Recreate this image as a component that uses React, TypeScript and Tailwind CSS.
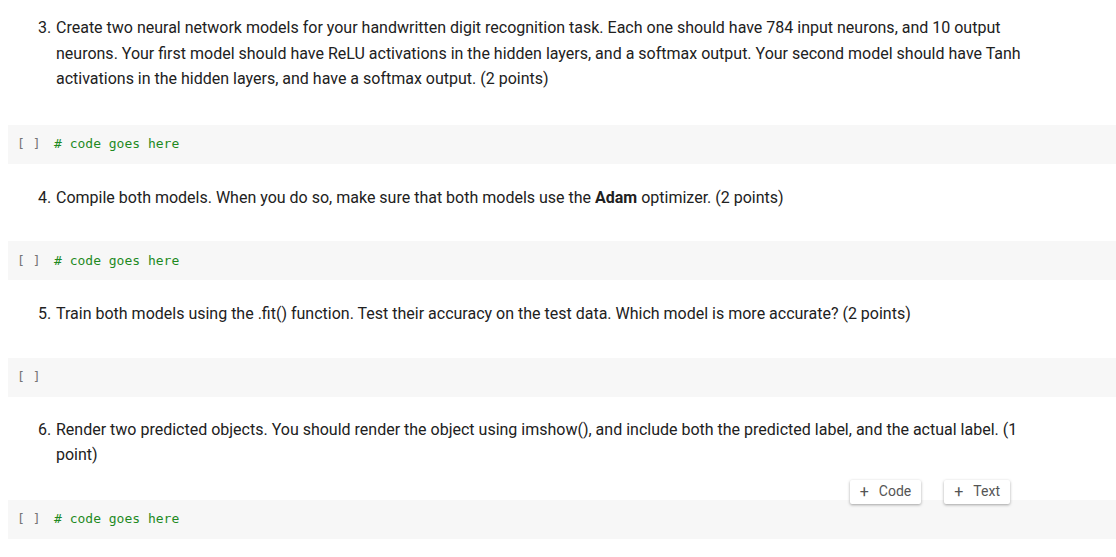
import React from 'react';

const textFont = { fontFamily: 'Roboto, "Noto Sans", sans-serif' };

function TextCell({ num, children, className = '' }: { num: string; children: React.ReactNode; className?: string }) {
  return (
    <div className={`flex pl-[38px] pr-[72px] text-[16px] leading-[25.5px] text-[#212121] ${className}`}>
      <span className="w-[18px] shrink-0">{num}</span>
      <p>{children}</p>
    </div>
  );
}

function CodeCell({ code }: { code?: string }) {
  return (
    <div className="ml-2 flex h-[39px] items-center bg-[#f7f7f7] font-['DejaVu_Sans_Mono',monospace] text-[13px]">
      <span className="w-[46px] shrink-0 pl-[9px] text-[#757575] whitespace-pre">[ ]</span>
      {code && <span className="text-[#1f8a1f] whitespace-pre">{code}</span>}
    </div>
  );
}

export default function App() {
  return (
    <div className="w-[1116px] h-[557px] overflow-hidden bg-white" style={textFont}>
      <TextCell num="3." className="pt-[15px] pb-[33px]">
        Create two neural network models for your handwritten digit recognition task. Each one should have 784 input
        neurons, and 10 output neurons. Your first model should have ReLU activations in the hidden layers, and a
        softmax output. Your second model should have Tanh activations in the hidden layers, and have a softmax output.
        (2 points)
      </TextCell>
      <CodeCell code="# code goes here" />
      <TextCell num="4." className="pt-[21px] pb-[31px]">
        Compile both models. When you do so, make sure that both models use the <b className="font-bold">Adam</b>{' '}
        optimizer. (2 points)
      </TextCell>
      <CodeCell code="# code goes here" />
      <TextCell num="5." className="pt-[21px] pb-[31px]">
        Train both models using the .fit() function. Test their accuracy on the test data. Which model is more
        accurate? (2 points)
      </TextCell>
      <CodeCell />
      <TextCell num="6." className="pt-[20px] pb-[32px]">
        Render two predicted objects. You should render the object using imshow(), and include both the predicted
        label, and the actual label. (1 point)
      </TextCell>
      <div className="relative">
        <div className="absolute right-[106px] top-[-20px] flex gap-[23px] text-[14px] text-[#555]">
          <button className="flex h-[24px] items-center gap-[10px] rounded-[2px] bg-white px-[10px] shadow-[0_1px_3px_rgba(0,0,0,0.35)]">
            <span className="text-[16px] leading-none">+</span>
            <span>Code</span>
          </button>
          <button className="flex h-[24px] items-center gap-[10px] rounded-[2px] bg-white px-[10px] shadow-[0_1px_3px_rgba(0,0,0,0.35)]">
            <span className="text-[16px] leading-none">+</span>
            <span>Text</span>
          </button>
        </div>
        <CodeCell code="# code goes here" />
      </div>
    </div>
  );
}
